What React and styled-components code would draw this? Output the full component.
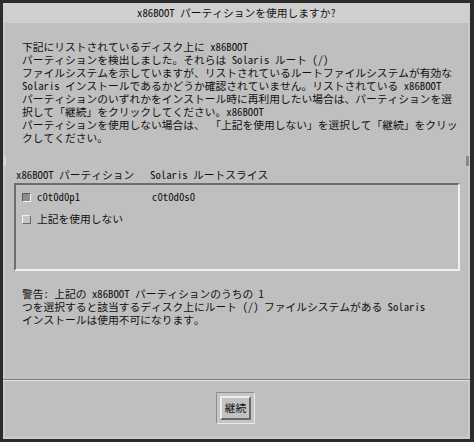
import React from 'react';
import styled, { createGlobalStyle } from 'styled-components';

const GlobalStyle = createGlobalStyle`
  html, body {
    margin: 0;
    padding: 0;
    background: #2b2b2b;
  }
  * {
    box-sizing: border-box;
  }
`;

const font = `"Noto Sans Mono CJK JP", "Noto Sans CJK JP", sans-serif`;

const Window = styled.div`
  width: 474px;
  height: 442px;
  border-top: 3px solid #2b2b2b;
  border-left: 3px solid #2b2b2b;
  border-right: 4px solid #2b2b2b;
  border-bottom: 3px solid #2b2b2b;
  display: flex;
  flex-direction: column;
  font-family: ${font};
  font-size: 10.75px;
  color: #111;
`;

const TitleBar = styled.div`
  height: 20px;
  line-height: 20px;
  background: #cfcfcf;
  text-align: center;
  white-space: nowrap;
`;

const Body = styled.div`
  flex: 1;
  background: #bfbfbf;
  border-left: 2px solid #cacaca;
  border-right: 2px solid #cacaca;
  border-bottom: 2px solid #cacaca;
  display: flex;
  flex-direction: column;
`;

const TextBlock = styled.div`
  margin: ${p => p.$top}px 0 0 17px;
  line-height: 13px;
  white-space: nowrap;
`;

const Line = styled.div`
  height: 13px;
`;

const HandleRow = styled.div`
  margin-top: 12px;
  height: 10px;
  display: flex;
  justify-content: space-between;
`;

const Grip = styled.div`
  width: ${p => (p.$side === 'left' ? 2 : 3)}px;
  height: 10px;
  margin-left: ${p => (p.$side === 'left' ? -1 : 0)}px;
  margin-right: ${p => (p.$side === 'right' ? -1 : 0)}px;
  background: ${p => (p.$side === 'left' ? '#dadada' : '#8a8a8a')};
`;

const Columns = styled.div`
  display: grid;
  grid-template-columns: ${p => p.$first}px auto;
  align-items: center;
  line-height: 12px;
  white-space: nowrap;
`;

const Header = styled(Columns)`
  margin: 3px 0 0 11px;
`;

const ListBox = styled.div`
  margin: 2px 8px 0 9px;
  height: 88px;
  border-top: 2px solid #6e6e6e;
  border-left: 2px solid #6e6e6e;
  border-right: 2px solid #f0f0f0;
  border-bottom: 2px solid #f0f0f0;
  padding: 6px 0 0 6px;
  display: flex;
  flex-direction: column;
  gap: 10px;
`;

const Item = styled(Columns)`
  grid-template-columns: 9px 6px 115px auto;
`;

const Check = styled.span`
  width: 9px;
  height: 9px;
  background: ${p => (p.$on ? '#8c8c8c' : '#c4c4c4')};
  border-top: 1px solid ${p => (p.$on ? '#5a5a5a' : '#f2f2f2')};
  border-left: 1px solid ${p => (p.$on ? '#5a5a5a' : '#f2f2f2')};
  border-right: 1px solid ${p => (p.$on ? '#f2f2f2' : '#6a6a6a')};
  border-bottom: 1px solid ${p => (p.$on ? '#f2f2f2' : '#6a6a6a')};
`;

const Separator = styled.div`
  margin-top: 53px;
  margin-left: -2px;
  margin-right: -2px;
  height: 2px;
  border-top: 1px solid #7e7e7e;
  border-bottom: 1px solid #e2e2e2;
`;

const ButtonRow = styled.div`
  margin-top: 11px;
  display: flex;
  justify-content: center;
  padding-right: 2px;
`;

const DefaultRing = styled.div`
  width: 39px;
  height: 32px;
  padding: 3px;
  border-top: 1px solid #8e8e8e;
  border-left: 1px solid #8e8e8e;
  border-right: 1px solid #ececec;
  border-bottom: 1px solid #ececec;
  background: #c6c6c6;
  display: flex;
`;

const Button = styled.button`
  flex: 1;
  margin: 0;
  padding: 0;
  font-family: ${font};
  font-size: 10.75px;
  color: #111;
  background: #c2c2c2;
  border-top: 2px solid #ededed;
  border-left: 2px solid #ededed;
  border-right: 2px solid #6a6a6a;
  border-bottom: 2px solid #6a6a6a;
  line-height: 18px;
`;

const message = [
  '下記にリストされているディスク上に x86BOOT',
  'パーティションを検出しました。それらは Solaris ルート (/)',
  'ファイルシステムを示していますが、リストされているルートファイルシステムが有効な',
  'Solaris インストールであるかどうか確認されていません。リストされている x86BOOT',
  'パーティションのいずれかをインストール時に再利用したい場合は、パーティションを選',
  '択して「継続」をクリックしてください。x86BOOT',
  'パーティションを使用しない場合は、 「上記を使用しない」を選択して「継続」をクリッ',
  'クしてください。',
];

const warning = [
  '警告: 上記の x86BOOT パーティションのうちの 1',
  'つを選択すると該当するディスク上にルート (/) ファイルシステムがある Solaris',
  'インストールは使用不可になります。',
];

const items = [
  { id: 'p1', name: 'c0t0d0p1', slice: 'c0t0d0s0', on: true },
  { id: 'none', name: '上記を使用しない', slice: '', on: false },
];

export default function App() {
  return (
    <>
      <GlobalStyle />
      <Window>
        <TitleBar>x86BOOT パーティションを使用しますか?</TitleBar>
        <Body>
          <TextBlock $top={17}>
            {message.map((l, i) => <Line key={i}>{l}</Line>)}
          </TextBlock>

          <HandleRow>
            <Grip $side="left" />
            <Grip $side="right" />
          </HandleRow>

          <Header $first={134}>
            <span>x86BOOT パーティション</span>
            <span>Solaris ルートスライス</span>
          </Header>
          <ListBox>
            {items.map(it => (
              <Item key={it.id}>
                <Check $on={it.on} />
                <span />
                <span>{it.name}</span>
                <span>{it.slice}</span>
              </Item>
            ))}
          </ListBox>

          <TextBlock $top={16}>
            {warning.map((l, i) => <Line key={i}>{l}</Line>)}
          </TextBlock>

          <Separator />
          <ButtonRow>
            <DefaultRing>
              <Button>継続</Button>
            </DefaultRing>
          </ButtonRow>
        </Body>
      </Window>
    </>
  );
}
